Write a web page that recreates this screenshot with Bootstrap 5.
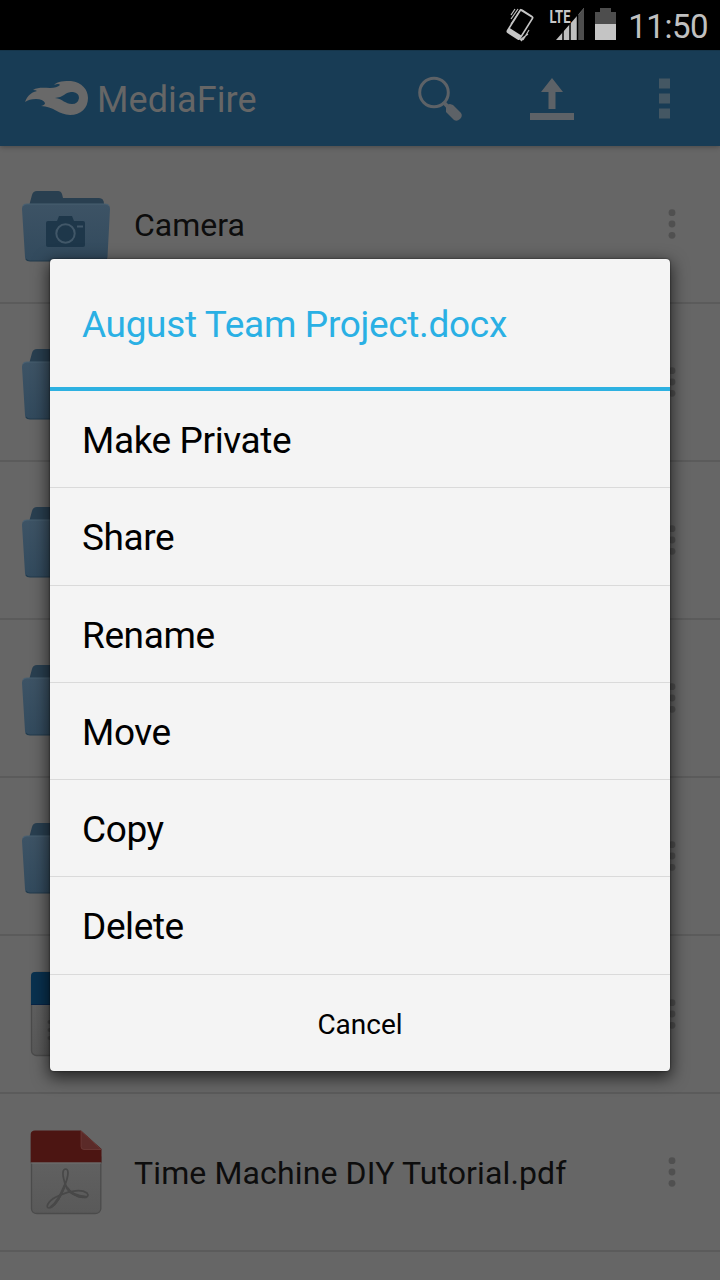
<!DOCTYPE html>
<html lang="en">
<head>
<meta charset="utf-8">
<meta name="viewport" content="width=device-width, initial-scale=1">
<title>MediaFire</title>
<link href="https://cdn.jsdelivr.net/npm/bootstrap@5.3.0/dist/css/bootstrap.min.css" rel="stylesheet">
<style>
body{font-family:Roboto,"Noto Sans",sans-serif;background:#666;width:720px;height:1280px;overflow:hidden}
svg{display:block;flex:none}
.status{height:50px;background:#000;color:#c0c0c0;font-size:33px;padding-right:12px;padding-left:497px}
.status svg{width:125px;height:50px}
.clock{line-height:54px;letter-spacing:-.5px}
.appbar{height:96px;background:#183c55;border-top:1px solid #15354a;box-shadow:0 1px 5px rgba(0,0,0,.3);position:relative;color:#666;padding-left:24px}
.brand{font-size:36px;line-height:96px;margin-left:7px;padding-top:2px;letter-spacing:.1px}
.file-row{height:158px;border-bottom:2px solid #5b5b5b;color:#0d0d0d;font-size:32px;padding-left:20px}
.folder-icon{margin-top:8px}
.file-name{margin-left:22px;padding-top:2px;flex:1;white-space:nowrap}
.long-name{letter-spacing:.13px}
.dots{width:96px;height:60px}
.dialog{position:absolute;left:50px;top:259px;width:620px;height:811.5px;background:#f4f4f4;border-radius:4px;box-shadow:0 0 2px rgba(0,0,0,.7),0 5px 16px 2px rgba(0,0,0,.62);color:#000;overflow:visible}
.dialog-title{height:132px;border-bottom:4px solid #2db1e1;color:#2ab0e4;font-size:37px;padding:0 32px;line-height:132px;letter-spacing:-.33px}
.dialog .list-group-item{height:97.25px;background:transparent;border:0;border-bottom:1.5px solid #dadada!important;color:#000;font-size:37px;padding:0 32px;line-height:100px;border-radius:0;letter-spacing:-.4px}
.cancel{height:96px;background:none;border:0;color:#000;font-size:28px;padding:1px 0 0;line-height:98px}
</style>
</head>
<body>
<svg width="0" height="0" class="position-absolute">
<defs>
<linearGradient id="folderFace" x2="0" y2="1"><stop stop-color="#3d5365"/><stop offset="1" stop-color="#324a5d"/></linearGradient>
<linearGradient id="paper" x2="0" y2="1"><stop stop-color="#646464"/><stop offset="1" stop-color="#595959"/></linearGradient>
<symbol id="folder" viewBox="0 0 92 80">
<path d="M9 18 12 7Q13 3 17 3H38Q41 3 42 6L43 10H79Q84 10 84 16V20H9Z" fill="#293f50"/>
<path d="M7 16H85Q90 16 90 21L87.500 69Q87 73 83 73H9Q5 73 5 69L2 21Q2 16 7 16Z" fill="url(#folderFace)"/>
<path d="M3 18Q4 16 7 16H85Q88 16 89 18" fill="none" stroke="#496071" stroke-width="1.200"/>
<path d="M6 71Q7 73 10 73H83Q86 73 87 71" fill="none" stroke="#223b4d" stroke-width="1.200"/>
</symbol>
<symbol id="more" viewBox="0 0 96 60"><g fill="#505050"><circle cx="48" cy="18.700" r="3.400"/><circle cx="48" cy="30" r="3.400"/><circle cx="48" cy="41.300" r="3.400"/></g></symbol>
</defs></svg>

<header class="status d-flex justify-content-between">
<svg viewBox="0 0 125 50">
<g transform="translate(23 24.500) rotate(32)"><rect x="-8.200" y="-14" width="16.400" height="28" rx="2.500" fill="#c6c6c6"/><rect x="-6.500" y="-12" width="13" height="20.500" fill="#000"/></g>
<g stroke="#c0c0c0" stroke-width="1.200"><path d="M14 15 18 9M14 19 21 9M14 24 24 9M32 30 26 40M31 34 23 40M28 37 24 41"/></g>
<path d="M59 40 87 8V40Z" fill="#c0c0c0"/><path d="M81 15 87 8V40H81Z" fill="#4d4d4d"/>
<path d="M66 28V41M73 20V41M80.500 12V41" stroke="#000" stroke-width="1.500"/>
<path d="M51 8H74V19L69 24H51Z" fill="#000"/>
<text x="52.500" y="23" font-family="Roboto" font-weight="700" font-size="18" textLength="21" lengthAdjust="spacingAndGlyphs" fill="#c8c8c8">LTE</text>
<path d="M98 12H103V8H114V12H119V24H98Z" fill="#4d4d4d"/><path d="M98 24H119V40H98Z" fill="#c4c4c4"/>
</svg>
<span class="clock">11:50</span>
</header>

<nav class="appbar d-flex align-items-center">
<svg width="66" height="40" viewBox="24 79 66 40"><path fill="#696969" fill-rule="evenodd" d="M25 102C28 94 33 92 37 91Q36 90 33 90C38 87 44 88 50 88Q57 88 60 85Q59 83 54 85C57 81 65 81 71 81C82 82 88 90 88 98C88 108 81 115 70 115C59 115 53 106 41 106Q45 105 45 103Q43 99 36 99Q29 99 25 102ZM55 98Q60 98 64 95C68 92 70 92 73 92Q79 93 79 98Q78 104 72 104C65 104 63 99 55 98Z"/></svg>
<span class="brand flex-grow-1">MediaFire</span>
<svg width="320" height="96" viewBox="0 0 320 96">
<g fill="none" stroke="#5d6267"><circle cx="34" cy="41.500" r="14.300" stroke-width="3"/><path d="M43.500 51 48 56" stroke-width="4"/></g>
<path d="M46 56Q47 53 50 53L53 54 61 62Q63 65 60 68Q57 71 54 69L46 61Z" fill="#5d6267"/>
<path d="M152 27 163 41H155.500V58H148.500V41H141ZM130 62H174V69H130Z" fill="#5d6267"/>
<path d="M259 27.500H270V37.500H259ZM259 42.500H270V52.500H259ZM259 57.500H270V67.500H259Z" fill="#445763"/>
</svg>
</nav>

<main>
<div class="file-row d-flex align-items-center"><svg class="folder-icon" width="92" height="80" viewBox="0 0 92 80"><use href="#folder"/>
<path d="M28 33H37L39 28H52L54 33H63Q65 33 65 35V57Q65 59 63 59H28Q26 59 26 57V35Q26 33 28 33Z" fill="#1e374a"/><circle cx="45.500" cy="45.500" r="9.200" fill="none" stroke="#415768" stroke-width="2"/><path d="M57 38.500H63" stroke="#415768" stroke-width="2"/></svg><span class="file-name">Camera</span><svg class="dots"><use href="#more"/></svg></div>
<div class="file-row d-flex align-items-center justify-content-between"><svg class="folder-icon" width="92" height="80"><use href="#folder"/></svg><svg class="dots"><use href="#more"/></svg></div>
<div class="file-row d-flex align-items-center justify-content-between"><svg class="folder-icon" width="92" height="80"><use href="#folder"/></svg><svg class="dots"><use href="#more"/></svg></div>
<div class="file-row d-flex align-items-center justify-content-between"><svg class="folder-icon" width="92" height="80"><use href="#folder"/></svg><svg class="dots"><use href="#more"/></svg></div>
<div class="file-row d-flex align-items-center justify-content-between"><svg class="folder-icon" width="92" height="80"><use href="#folder"/></svg><svg class="dots"><use href="#more"/></svg></div>
<div class="file-row d-flex align-items-center justify-content-between"><svg width="92" height="90" viewBox="0 0 92 90"><rect x="11.500" y="3.500" width="70" height="83" rx="5" fill="url(#paper)" stroke="#4b4b4b" stroke-width="1.300"/><path d="M11 36V7Q11 3 15 3H62L82 22V36Z" fill="#09314f"/><path d="M11 35.500H82" stroke="#082447"/><g fill="#474747"><circle cx="29.500" cy="53" r="2"/><circle cx="29.500" cy="61" r="2"/><circle cx="29.500" cy="69" r="2"/></g></svg><svg class="dots"><use href="#more"/></svg></div>
<div class="file-row d-flex align-items-center"><svg width="92" height="90" viewBox="0 0 92 90"><path d="M11.500 10V82Q12 86.500 17 86.500H75Q80 86.500 80.800 82V30Z" fill="url(#paper)" stroke="#4b4b4b" stroke-width="1.300"/><path d="M10.700 35.500V7Q11 3.500 15 3.500H61L81.500 22V35.500Z" fill="#4c1512"/><path d="M61 4 81 22.500H64Q61 22.500 61 19.500Z" fill="#5b2a28" stroke="#703d3b" stroke-width=".7"/><path d="M11 36H81" stroke="#777" stroke-width=".8"/>
<g fill="none" stroke="#484848" stroke-linecap="round"><path d="M45.500 58C42 48 42 42 46 42C50 43 47 53 45 58C41 69 35 80 29 81C25 81 28 74 36 70C49 64 61 62 67 66C71 71 61 72 55 68C50 65 47 61 45.500 58" stroke-width="1.700"/><path d="M45 58C41 68 37 76 31 80M47 61Q52 69 66 70" stroke-width="2.600"/></g></svg><span class="file-name long-name">Time Machine DIY Tutorial.pdf</span><svg class="dots"><use href="#more"/></svg></div>
</main>

<section class="dialog" role="dialog" aria-label="August Team Project.docx">
<div class="dialog-title">August Team Project.docx</div>
<div class="list-group list-group-flush">
<button class="list-group-item text-start">Make Private</button>
<button class="list-group-item text-start">Share</button>
<button class="list-group-item text-start">Rename</button>
<button class="list-group-item text-start">Move</button>
<button class="list-group-item text-start">Copy</button>
<button class="list-group-item text-start">Delete</button>
</div>
<button class="cancel w-100 text-center">Cancel</button>
</section>
<script src="https://cdn.jsdelivr.net/npm/bootstrap@5.3.0/dist/js/bootstrap.bundle.min.js"></script>
</body>
</html>
